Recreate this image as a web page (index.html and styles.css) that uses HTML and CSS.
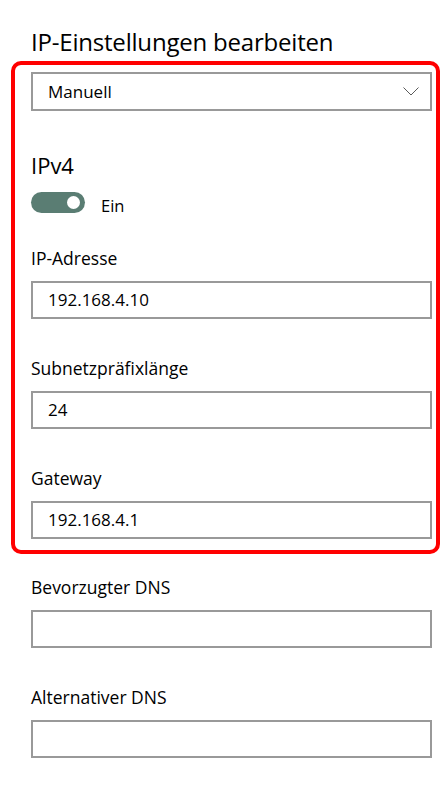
FILE: index.html
```html
<!DOCTYPE html>
<html lang="de">
<head>
<meta charset="utf-8">
<title>IP-Einstellungen bearbeiten</title>
<link rel="stylesheet" href="styles.css">
</head>
<body>
<main class="page">
  <h1 class="title">IP-Einstellungen bearbeiten</h1>
  <section class="panel">
    <div class="select">
      <span class="select-value">Manuell</span>
      <svg class="chevron" width="16" height="9" viewBox="0 0 16 9" aria-hidden="true">
        <polyline points="0.5,0.5 8,8 15.5,0.5" fill="none" stroke="#5a5a5a" stroke-width="1"/>
      </svg>
    </div>
    <h2 class="section-title">IPv4</h2>
    <div class="toggle-row">
      <span class="toggle"><span class="knob"></span></span>
      <span class="toggle-label">Ein</span>
    </div>
    <div class="field first">
      <label class="label">IP-Adresse</label>
      <div class="input">192.168.4.10</div>
    </div>
    <div class="field">
      <label class="label">Subnetzpräfixlänge</label>
      <div class="input">24</div>
    </div>
    <div class="field">
      <label class="label">Gateway</label>
      <div class="input">192.168.4.1</div>
    </div>
  </section>
  <div class="outside">
    <div class="field">
      <label class="label">Bevorzugter DNS</label>
      <div class="input"></div>
    </div>
    <div class="field">
      <label class="label">Alternativer DNS</label>
      <div class="input"></div>
    </div>
  </div>
</main>
</body>
</html>
```

FILE: styles.css
```css
html, body {
  margin: 0;
  padding: 0;
  background: #ffffff;
}

body {
  font-family: "Open Sans", "Noto Sans", sans-serif;
  color: #000000;
}

.page {
  padding-top: 26px;
  width: 447px;
  box-sizing: border-box;
}

.title {
  margin: 0 0 3px 31px;
  font-size: 24px;
  line-height: 32px;
  font-weight: 400;
  letter-spacing: -0.2px;
}

.panel {
  margin-left: 11px;
  width: 429px;
  box-sizing: border-box;
  border: 4px solid #ff0000;
  border-radius: 10px;
  padding: 7px 4px 11px 16px;
  display: flex;
  flex-direction: column;
}

.select {
  height: 39px;
  box-sizing: border-box;
  border: 2px solid #999999;
  display: flex;
  align-items: center;
  justify-content: space-between;
  padding: 0 11px 0 15px;
}

.select-value {
  font-size: 17px;
  line-height: 20px;
}

.chevron {
  display: block;
}

.section-title {
  margin: 40px 0 0 0;
  font-size: 22px;
  line-height: 28px;
  font-weight: 400;
}

.toggle-row {
  margin-top: 13px;
  height: 21px;
  display: flex;
  align-items: flex-start;
  gap: 16px;
}

.toggle {
  width: 54px;
  height: 21px;
  border-radius: 11px;
  background: #5a7d73;
  display: flex;
  align-items: center;
  justify-content: flex-end;
  padding-right: 5px;
  box-sizing: border-box;
}

.knob {
  width: 13px;
  height: 13px;
  border-radius: 50%;
  background: #ffffff;
}

.toggle-label {
  font-size: 16.5px;
  line-height: 20px;
  margin-top: 4px;
}

.field {
  display: flex;
  flex-direction: column;
  gap: 13px;
  margin-top: 39px;
}

.field.first {
  margin-top: 35px;
}

.label {
  font-size: 17.5px;
  line-height: 20px;
}

.input {
  height: 38px;
  box-sizing: border-box;
  border: 2px solid #999999;
  padding: 0 15px;
  font-size: 17px;
  line-height: 34px;
}

.outside {
  margin: -16px 0 0 31px;
  width: 401px;
}
```
